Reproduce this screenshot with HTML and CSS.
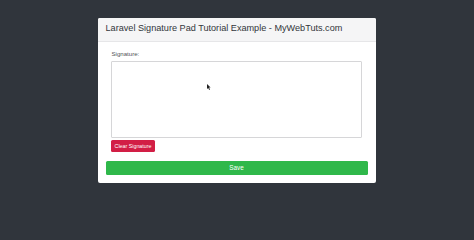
FILE: index.html
```html
<!DOCTYPE html>
<html>
<head>
<meta charset="utf-8">
<link rel="stylesheet" href="styles.css">
</head>
<body>
<div class="page">
  <div class="card">
    <div class="card-header">Laravel Signature Pad Tutorial Example - MyWebTuts.com</div>
    <div class="card-body">
      <div class="group">
        <label class="label">Signature:</label>
        <div class="pad">
          <svg class="cursor" width="4" height="6" viewBox="0 0 4 6"><path d="M0 0 L0 5 L1.2 4 L2.2 6 L3 5.6 L2 3.6 L3.6 3.6 Z" fill="#222"/></svg>
        </div>
        <button class="btn btn-clear">Clear Signature</button>
      </div>
      <button class="btn btn-save">Save</button>
    </div>
  </div>
</div>
</body>
</html>
```
FILE: styles.css
```css
html, body {
  margin: 0;
  padding: 0;
  background: #30353c;
  width: 474px;
  height: 220px;
  overflow: hidden;
  font-family: "Liberation Sans", Arial, sans-serif;
}
.page {
  padding-top: 18px;
  padding-left: 97.5px;
}
.card {
  width: 278px;
  height: 165px;
  background: #fff;
  border-radius: 2px;
  box-sizing: border-box;
  display: flex;
  flex-direction: column;
}
.card-header {
  height: 24px;
  box-sizing: border-box;
  background: #f5f5f6;
  border-bottom: 1px solid #e6e6e8;
  border-radius: 2px 2px 0 0;
  color: #33363b;
  font-size: 9.15px;
  padding: 5px 0 0 8px;
  white-space: nowrap;
}
.card-body {
  padding: 8px 8px 0 8px;
  display: flex;
  flex-direction: column;
}
.group {
  padding: 0 5.5px;
  display: flex;
  flex-direction: column;
  align-items: flex-start;
}
.label {
  font-size: 6.1px;
  color: #505357;
  height: 11px;
  line-height: 8px;
  padding-left: 0.5px;
}
.pad {
  position: relative;
  align-self: stretch;
  height: 77px;
  box-sizing: border-box;
  border: 1px solid #d6d6d8;
  border-radius: 1px;
  background: #fff;
}
.cursor {
  position: absolute;
  left: 95px;
  top: 22px;
}
.btn {
  border: none;
  color: #fff;
  font-family: "Liberation Sans", Arial, sans-serif;
  cursor: pointer;
  padding: 0;
}
.btn-clear {
  margin-top: 2px;
  width: 44px;
  height: 11.5px;
  background: #d21e45;
  border-radius: 1.5px;
  font-size: 5.3px;
}
.btn-save {
  margin-top: 9px;
  width: 262px;
  height: 14px;
  background: #2fb84a;
  border-radius: 1.5px;
  font-size: 6.3px;
}
```
